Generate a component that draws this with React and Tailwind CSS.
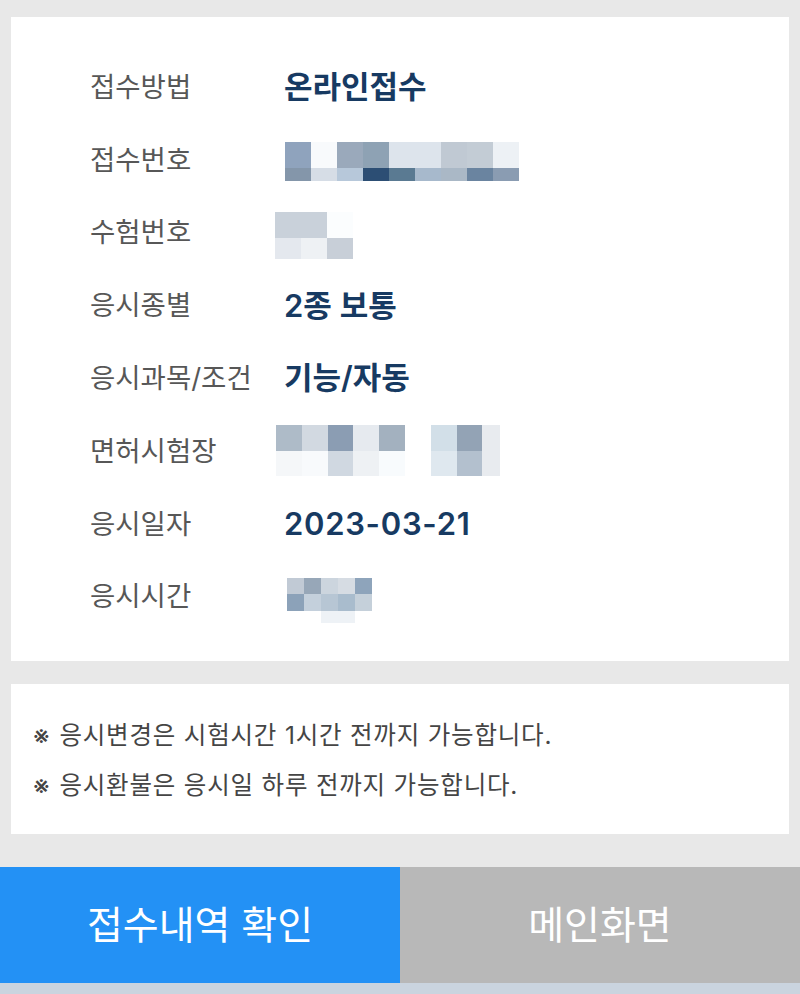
import React from 'react';

const FONT = { fontFamily: 'Inter, "Noto Sans CJK KR", "Noto Sans", sans-serif' };

// Mosaic blocks used in place of blurred personal data
const MOSAICS = {
  receipt: {
    cell: 'w-[26px]',
    rows: [
      { h: 'h-[26px]', colors: ['#8fa3bd', '#f8fafc', '#9aa9bb', '#8ea2b4', '#dde4ec', '#dde4ec', '#c0c9d3', '#c3ccd5', '#edf1f5'] },
      { h: 'h-[13px]', colors: ['#8496aa', '#d6dde6', '#b7c8da', '#2c4e74', '#5a7a92', '#a7b9cc', '#aab8c6', '#6a84a0', '#8a9cb2'] },
    ],
  },
  exam: {
    cell: 'w-[26px]',
    rows: [
      { h: 'h-[26px]', colors: ['#c9d1da', '#c9d1da', '#fbfdfe'] },
      { h: 'h-[21px]', colors: ['#e4e8ee', '#eef1f4', '#c8cfd8'] },
    ],
  },
  place: {
    cell: 'w-[25.8px]',
    rows: [
      { h: 'h-[26px]', colors: ['#aebbc8', '#d2d9e1', '#8b9db3', '#e6eaef', '#a3b1bf', '#ffffff', '#d2dfe8', '#93a3b5', '#e8ebef'] },
      { h: 'h-[25px]', colors: ['#f5f7f9', '#f8fafc', '#d0d8e1', '#eef1f4', '#f8fbfd', '#ffffff', '#dfe8ef', '#b3c0ce', '#e8ebef'] },
    ],
    last: 'w-[18px]',
  },
  time: {
    cell: 'w-[17px]',
    rows: [
      { h: 'h-[16px]', colors: ['#c1cad5', '#97a7b8', '#ccd5de', '#d6dce3', '#8ea4bb'] },
      { h: 'h-[17px]', colors: ['#8ca2b9', '#c4d0dc', '#b7c6d4', '#a9bccd', '#c5d0da'] },
      { h: 'h-[12px]', colors: ['#ffffff', '#ffffff', '#eef2f6', '#eef2f6', '#ffffff'] },
    ],
  },
};

function Mosaic({ kind }) {
  const m = MOSAICS[kind];
  return (
    <div className="flex flex-col">
      {m.rows.map((row, r) => (
        <div key={r} className="flex">
          {row.colors.map((c, i) => (
            <div
              key={i}
              className={`${row.h} ${m.last && i === row.colors.length - 1 ? m.last : m.cell}`}
              style={{ backgroundColor: c }}
            />
          ))}
        </div>
      ))}
    </div>
  );
}

const ROWS = [
  { label: '접수방법', value: '온라인접수' },
  { label: '접수번호', mosaic: 'receipt', offset: 'ml-px mt-[2px]' },
  { label: '수험번호', mosaic: 'exam', offset: '-ml-[9px] mt-[5px]' },
  { label: '응시종별', value: '2종 보통' },
  { label: '응시과목/조건', value: '기능/자동' },
  { label: '면허시험장', mosaic: 'place', offset: '-ml-[8px] mt-[-2px]' },
  { label: '응시일자', value: '2023-03-21', wide: true },
  { label: '응시시간', mosaic: 'time', offset: 'ml-[3px] mt-[8px]' },
];

const NOTES = [
  '응시변경은 시험시간 1시간 전까지 가능합니다.',
  '응시환불은 응시일 하루 전까지 가능합니다.',
];

export default function App() {
  return (
    <div className="w-[800px] h-[994px] bg-[#e8e8e8] flex flex-col overflow-hidden" style={FONT}>
      {/* Receipt info */}
      <div className="mx-[11px] mt-[17px] h-[644px] bg-white pt-[34px] pl-[79px]">
        {ROWS.map((row) => (
          <div key={row.label} className="h-[72.8px] flex items-center">
            <span className="w-[194px] shrink-0 text-[27.5px] text-[#575757]">
              {row.label}
            </span>
            {row.mosaic ? (
              <div className={row.offset}>
                <Mosaic kind={row.mosaic} />
              </div>
            ) : (
              <span className={`text-[31px] font-semibold text-[#173a62] ${row.wide ? 'tracking-[0.7px]' : ''}`}>
                {row.value}
              </span>
            )}
          </div>
        ))}
      </div>

      {/* Notice */}
      <div className="mx-[11px] mt-[23px] h-[150px] bg-white pl-[22px] pt-[34px] flex flex-col gap-[15px]">
        {NOTES.map((note) => (
          <div key={note} className="h-[35px] flex items-center gap-[9px] text-[24.5px] text-[#454545] tracking-[0.8px]">
            <span className="text-[26px] leading-none">※</span>
            <span className="leading-none">{note}</span>
          </div>
        ))}
      </div>

      {/* Buttons */}
      <div className="mt-[33px] flex h-[116px]">
        <button className="w-1/2 bg-[#2391f5] text-white text-[39px]">
          접수내역 확인
        </button>
        <button className="w-1/2 bg-[#b8b8b8] text-white text-[39px]">
          메인화면
        </button>
      </div>
      <div className="flex-1 bg-[#cad4df]" />
    </div>
  );
}
